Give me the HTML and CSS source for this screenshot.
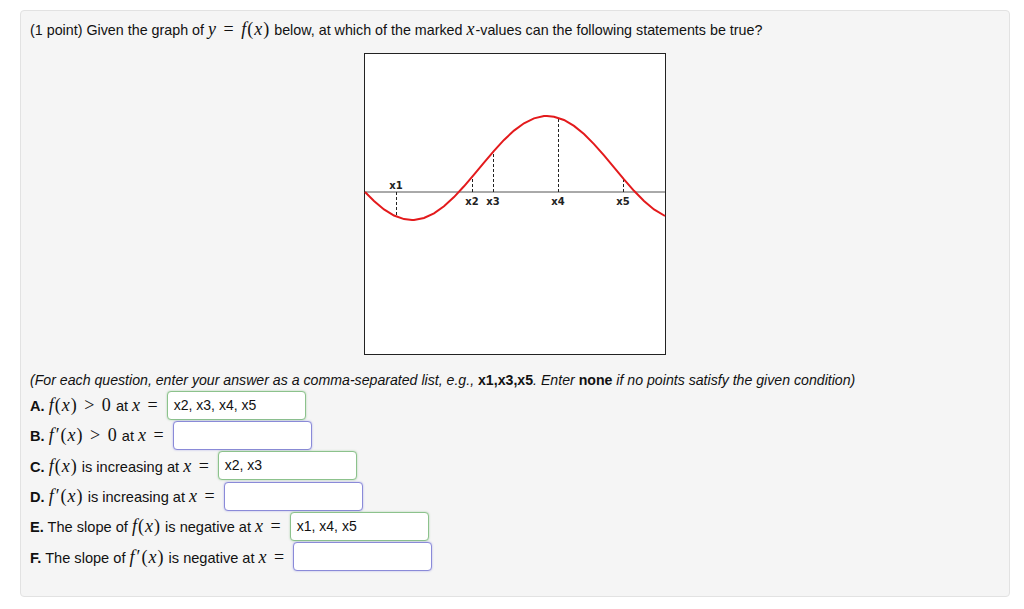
FILE: index.html
```html
<!DOCTYPE html>
<html>
<head>
<meta charset="utf-8">
<link rel="stylesheet" href="styles.css">
</head>
<body>
<div class="panel">
  <p class="title">(1 point) Given the graph of <span class="m"><i>y</i> <span class="r">=</span> <i>f</i>(<i>x</i>)</span> below, at which of the marked <span class="m"><i>x</i></span>-values can the following statements be true?</p>
  <div class="graph-wrap">
    <svg class="graph" width="302" height="302" viewBox="0 0 302 302">
      <rect x="0.5" y="0.5" width="301" height="301" fill="#fff" stroke="#222" stroke-width="1"/>
      <line x1="1" y1="139" x2="301" y2="139" stroke="#555" stroke-width="1"/>
      <g stroke="#222" stroke-width="1" stroke-dasharray="3,2">
        <line x1="32.5" y1="139" x2="32.5" y2="163"/>
        <line x1="108.5" y1="139" x2="108.5" y2="124"/>
        <line x1="129.5" y1="139" x2="129.5" y2="99"/>
        <line x1="194.5" y1="139" x2="194.5" y2="65"/>
        <line x1="259.5" y1="139" x2="259.5" y2="126"/>
      </g>
      <polyline fill="none" stroke="#e31a1c" stroke-width="2" points="1,139 10,148 20,156.4 30,162.5 40,166.1 48,167 50,166.9 60,165 70,160.3 80,153.2 90,144.1 100,133.3 110,121.6 120,109.6 130,97.8 140,86.9 150,77.6 160,70.3 170,65.4 180,63.1 183,63 190,63.7 200,67 210,72.9 220,81.1 230,91.1 240,102.4 250,114.4 260,126.4 270,137.8 280,148 290,156.4 301,163"/>
      <g class="lbl">
        <text x="32" y="136">x1</text>
        <text x="108" y="152">x2</text>
        <text x="129" y="152">x3</text>
        <text x="194" y="152">x4</text>
        <text x="259" y="152">x5</text>
      </g>
    </svg>
  </div>
  <p class="note">(For each question, enter your answer as a comma-separated list, e.g., <b>x1,x3,x5</b>. Enter <b>none</b> if no points satisfy the given condition)</p>
  <div class="rows">
    <div class="row"><span class="lab"><b>A.</b> <span class="m"><i>f</i>(<i>x</i>) <span class="r">&gt;</span> 0</span> at <span class="m"><i>x</i> <span class="r">=</span></span></span><span class="inp ok">x2, x3, x4, x5</span></div>
    <div class="row"><span class="lab"><b>B.</b> <span class="m"><i>f</i><span class="pr">′</span>(<i>x</i>) <span class="r">&gt;</span> 0</span> at <span class="m"><i>x</i> <span class="r">=</span></span></span><span class="inp empty"></span></div>
    <div class="row"><span class="lab"><b>C.</b> <span class="m"><i>f</i>(<i>x</i>)</span> is increasing at <span class="m"><i>x</i> <span class="r">=</span></span></span><span class="inp ok">x2, x3</span></div>
    <div class="row"><span class="lab"><b>D.</b> <span class="m"><i>f</i><span class="pr">′</span>(<i>x</i>)</span> is increasing at <span class="m"><i>x</i> <span class="r">=</span></span></span><span class="inp empty"></span></div>
    <div class="row"><span class="lab"><b>E.</b> The slope of <span class="m"><i>f</i>(<i>x</i>)</span> is negative at <span class="m"><i>x</i> <span class="r">=</span></span></span><span class="inp ok">x1, x4, x5</span></div>
    <div class="row"><span class="lab"><b>F.</b> The slope of <span class="m"><i>f</i><span class="pr">′</span>(<i>x</i>)</span> is negative at <span class="m"><i>x</i> <span class="r">=</span></span></span><span class="inp empty"></span></div>
  </div>
</div>
</body>
</html>
```
FILE: styles.css
```css
html, body {
  margin: 0;
  padding: 0;
  background: #fff;
}
body {
  font-family: "Liberation Sans", Arial, sans-serif;
  font-size: 14px;
  color: #111;
}
.panel {
  box-sizing: border-box;
  margin: 10px 0 0 20px;
  width: 990px;
  height: 587px;
  background: #f5f5f5;
  border: 1px solid #e2e2e2;
  border-radius: 4px;
  padding: 9px 9px;
}
.title {
  margin: 0;
  line-height: 20px;
  font-size: 14.3px;
}
.m {
  font-family: "Liberation Serif", "Times New Roman", serif;
  font-size: 18px;
  letter-spacing: 1px;
  line-height: 18px;
}
.m i {
  font-style: italic;
}
.r {
  margin: 0 1px;
}
.pr {
  margin-left: 1px;
}
.graph-wrap {
  display: flex;
  justify-content: center;
  margin-top: 13px;
}
.graph {
  display: block;
}
.lbl text {
  font-family: "DejaVu Sans", sans-serif;
  font-weight: bold;
  font-size: 10px;
  fill: #222;
  text-anchor: middle;
}
.note {
  margin: 16px 0 0 0;
  line-height: 18px;
  font-size: 14.15px;
  font-style: italic;
}
.note b {
  font-style: normal;
}
.rows {
  margin-top: 1px;
}
.row {
  display: flex;
  align-items: center;
  height: 30.3px;
}
.lab {
  white-space: pre;
  font-size: 14.6px;
}
.inp {
  box-sizing: border-box;
  display: block;
  margin-left: 7px;
  width: 139px;
  height: 29px;
  border-radius: 4px;
  background: #fff;
  padding: 0 6px;
  line-height: 27px;
  font-size: 14px;
}
.inp.ok {
  border: 1px solid #8cc28c;
  box-shadow: 0 0 2px rgba(90, 170, 90, 0.5);
}
.inp.empty {
  border: 1px solid #8a8ad8;
  box-shadow: 0 0 2px rgba(100, 100, 220, 0.5);
}
```
